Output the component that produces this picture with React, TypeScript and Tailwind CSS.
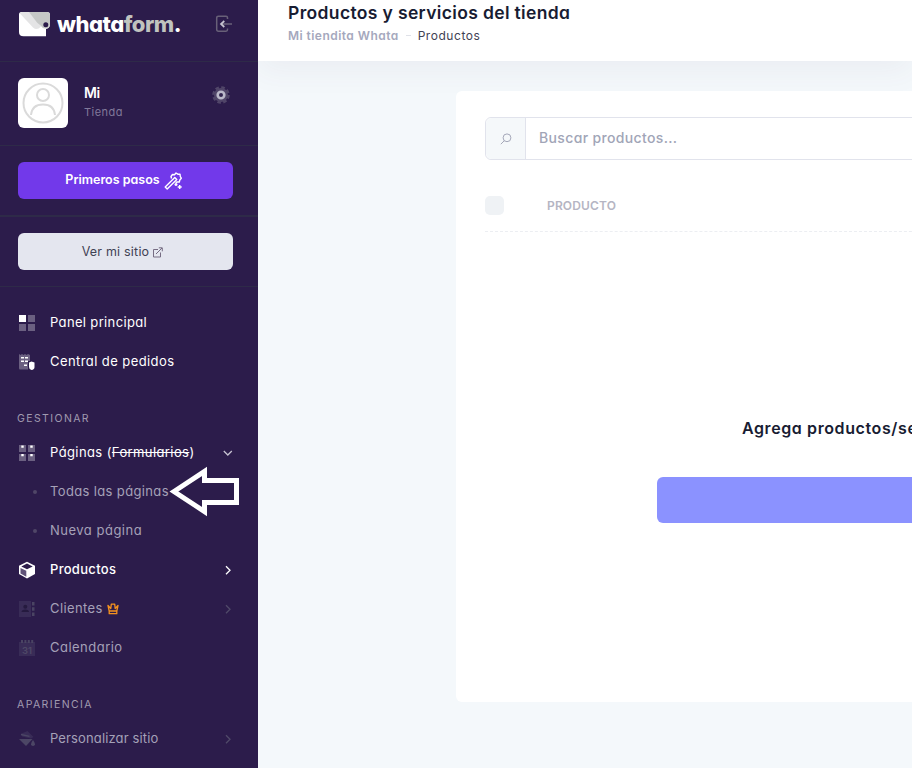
import type { ReactNode } from 'react';
import clsx from 'clsx';

const Logo = () => (
  <div className="flex items-center">
    <svg width="33" height="26" viewBox="0 0 33 26" className="shrink-0">
      <path d="M1 3.500Q1 1 3.500 1H29Q32 1 32 4V14Q31.500 17.500 28 18V25.300H5.500Q1 25.300 1 21Z" fill="#fff" />
      <path d="M1.500 2L4 1H14L23 15.500Q19 20 15 16.500Z" fill="#e4e4e5" />
      <path d="M11 1H29Q32 1 32 4V14Q31 18 27 17.500Q24 17 22.500 14.500L19 11.500Z" fill="#c5c7c6" />
      <circle cx="27.800" cy="13.800" r="2.500" fill="#2c1c4b" />
    </svg>
    <span className="ml-[6px] text-[22px] leading-[26px] font-extrabold tracking-[-0.500px] text-white">
      whata<span className="text-[#c0c3bf]">form</span>.
    </span>
  </div>
);

const CollapseIcon = () => (
  <svg width="18" height="18" viewBox="0 0 18 18" fill="none" strokeWidth="1.500">
    <path d="M12.500 4V2.800Q12.500 1.300 11 1.300H3.500Q1.700 1.300 1.700 3V14.500Q1.700 16.200 3.500 16.200H11Q12.500 16.200 12.500 14.500V13.500" stroke="#686078" />
    <path d="M7 9H17" stroke="#686078" />
    <path d="M9.300 6L6 9L9.300 12" stroke="#c6c3d0" strokeWidth="1.700" />
  </svg>
);

const GearIcon = () => (
  <svg width="18" height="18" viewBox="0 0 18 18">
    <circle cx="9" cy="9" r="7.600" fill="none" stroke="#514669" strokeWidth="2.400" strokeDasharray="3.600 2.370" />
    <circle cx="9" cy="9" r="7" fill="#514669" />
    <circle cx="9" cy="9" r="3.300" fill="#33264f" stroke="#bbb9c9" strokeWidth="2.600" />
  </svg>
);

const WandIcon = () => (
  <svg width="18" height="18" viewBox="0 0 18 18" fill="none" stroke="#fff" strokeWidth="1.400" strokeLinejoin="round">
    <path d="M1.200 15L10.800 5.400L12.800 7.400L3.200 17Z" />
    <path d="M7.500 6.500L7 4.500L8.500 2.500L10.500 2.700L12 1L13.800 2.200L16 2.200L16.300 4.500L17.300 6.200L15.800 8L15.300 10L13.200 10L11.500 10.500" />
    <path d="M12 11V14M10.500 12.500H13.500M15.700 13V17M13.700 15H17.700" strokeWidth="1.500" />
  </svg>
);

const ExternalIcon = () => (
  <svg width="10" height="11" viewBox="0 0 10 11" fill="none" stroke="#766d83" strokeWidth="1">
    <path d="M5 2.500H.5V10H7.500V5.500M3 7L9 1M5.800.8H9.300V4.300" />
  </svg>
);

const GridIcon = () => (
  <svg width="18" height="18" viewBox="0 0 18 18">
    <path d="M10 1H17V8H10ZM1 10H8V17H1ZM10 10H17V17H10Z" fill="#6b6081" />
    <path d="M1 1H8V8H1Z" fill="#fff" />
  </svg>
);

const OrdersIcon = () => (
  <svg width="18" height="18" viewBox="0 0 18 18">
    <path d="M1 1L2.500 2L4 1L5.500 2L7 1L8.500 2L10 1L12 2V8H10V16.500H2Q1 16.500 1 15Z" fill="#6b6081" />
    <path d="M3 4H6V5.500H3ZM7 4H10V5.500H7ZM3 7.500H6V9H3ZM7 7.500H10V9H7ZM6 11.500H9V13H6Z" fill="#fff" />
    <path d="M11 9.500L13.500 8.500L16.500 9.500V14Q16.500 16.500 13.500 17Q11 16.500 11 14Z" fill="#fff" />
  </svg>
);

const PagesIcon = () => (
  <svg width="18" height="18" viewBox="0 0 18 18">
    <path d="M1 1H8V8H1ZM10 1H17V8H10ZM1 10H8V17H1ZM10 10H17V17H10Z" fill="#6b6081" />
    <path d="M3.300 1.500H5.700V3.700H3.300ZM12.300 1.500H14.700V3.700H12.300ZM3.300 10H5.700V12.200H3.300ZM12.300 10H14.700V12.200H12.300Z" fill="#fff" />
  </svg>
);

const BoxIcon = () => (
  <svg width="18" height="18" viewBox="0 0 18 18">
    <path d="M9 .7L17 4.800V13L9 17.500L1 13V4.800Z" fill="#fff" />
    <path d="M9 2.500L14.700 5.400L9 8.300L3.300 5.400Z" fill="#2c1c4b" />
    <path d="M2.500 7L8.300 9.800V15.700L2.500 12.500Z" fill="#5f5278" />
  </svg>
);

const ContactsIcon = () => (
  <svg width="18" height="18" viewBox="0 0 18 18">
    <path d="M1 1H13V17H1Z" fill="#392c57" />
    <circle cx="7.300" cy="6.800" r="2" fill="#251a3f" />
    <path d="M3.500 12Q3.500 9.500 7.300 9.500Q11 9.500 11 12Z" fill="#251a3f" />
    <path d="M14 2H16.500V5.500H14ZM14 7.300H16.500V10.800H14ZM14 12.600H16.500V16H14Z" fill="#4a4463" />
  </svg>
);

const CalendarIcon = () => (
  <svg width="18" height="18" viewBox="0 0 18 18">
    <path d="M1 3H17V17H1Z" fill="#392c57" />
    <path d="M3 1H5V4H3ZM6.400 1H8.400V4H6.400ZM9.800 1H11.800V4H9.800ZM13.200 1H15.200V4H13.200Z" fill="#4a4463" />
    <text x="9" y="14.500" textAnchor="middle" fontSize="9.500" fontWeight="600" fill="#4f4967">31</text>
  </svg>
);

const BucketIcon = () => (
  <svg width="18" height="18" viewBox="0 0 18 18">
    <path d="M3.500 3.500L9.500 1L15.500 7L13 8.500L4 6.500Z" fill="#392c57" />
    <path d="M1 9H14.500L8 16Z" fill="#4c4665" />
    <path d="M3 4.500L11.500 6.300" stroke="#4c4665" strokeWidth="1.300" />
    <path d="M15 10Q17 12.500 17 14.300Q16.800 16 15 16Q13 16 13 14.300Q13 12.500 15 10Z" fill="#4c4665" />
  </svg>
);

const CrownIcon = () => (
  <svg width="12" height="12" viewBox="0 0 12 12" fill="none" stroke="#f6921e" strokeWidth="1.300" strokeLinejoin="round">
    <path d="M2.200 8L1 2.500L3.800 5.500L4.300 1.200H7.700L8.200 5.500L11 2.500L9.800 8ZM2.200 8V10.700H9.800V8" />
  </svg>
);

const Chevron = ({ color, down }: { color: string; down?: boolean }) => (
  <svg width="10" height="10" viewBox="0 0 10 10" fill="none" stroke={color} strokeWidth="1.300" className={clsx('ml-auto mr-px', down && 'rotate-90')}>
    <path d="M3 1.200L7 5.200L3 9.200" />
  </svg>
);

interface ItemProps {
  icon?: ReactNode;
  text: string;
  children: ReactNode;
  end?: ReactNode;
}

const MenuItem = ({ icon, text, children, end }: ItemProps) => (
  <li className="flex h-[39px] items-center pl-[18px] pr-[24px]">
    <span className="flex w-[32px] shrink-0 items-center">{icon ?? <i className="ml-[15px] size-1 rounded-full bg-[#504667]" />}</span>
    <span className={clsx('flex items-center whitespace-nowrap text-[13px]', text)}>{children}</span>
    {end}
  </li>
);

const Heading = ({ children }: { children: ReactNode }) => (
  <li className="h-[52px] pl-[17px] pt-[30px] text-[10.500px] leading-4 tracking-[1.400px] text-[#a09ab0]">{children}</li>
);

const Sidebar = () => (
  <aside className="relative z-10 h-full w-[258px] shrink-0 bg-[#2c1c4b]">
    <div className="flex h-[62px] items-start justify-between border-b border-[#2e2a48] pl-[18px] pr-[25px] pt-[11px]">
      <Logo />
      <span className="pt-[4px]"><CollapseIcon /></span>
    </div>

    <div className="flex h-[84px] items-start border-b border-[#2e2a48] pl-[18px] pt-4">
      <div className="size-[50px] rounded-md bg-white">
        <svg width="50" height="50" viewBox="0 0 50 50" fill="none" stroke="#dadada" strokeWidth="2">
          <circle cx="25" cy="25" r="19.500" />
          <circle cx="25" cy="17" r="6" />
          <path d="M13 37Q14 26.500 25 26.500Q36 26.500 37 37" />
        </svg>
      </div>
      <div className="ml-4 pt-[5px]">
        <div className="text-[14px] font-semibold leading-5 tracking-[-0.300px] text-white">Mi</div>
        <div className="text-[11px] leading-[18px] tracking-[0.450px] text-[#81799a]">Tienda</div>
      </div>
      <span className="ml-auto mr-[28px] pt-[8px]"><GearIcon /></span>
    </div>

    <div className="h-[71px] border-b-2 border-[#2e2a48] px-[18px] pt-4">
      <button className="flex h-[37px] w-[215px] items-center justify-center gap-[4px] rounded-md bg-[#7239ea] pr-1 text-[12.500px] font-semibold text-white">
        Primeros pasos <WandIcon />
      </button>
    </div>

    <div className="h-[70px] border-b border-[#2e2a48] px-[18px] pt-4">
      <button className="flex h-[37px] w-[215px] items-center justify-center gap-1 rounded-md bg-[#e4e6ef] pr-[6px] pt-px text-[12.500px] tracking-[0.200px] text-[#3f4254]">
        Ver mi sitio <ExternalIcon />
      </button>
    </div>

    <ul className="pt-4">
      <MenuItem icon={<GridIcon />} text="text-white tracking-[0.350px]">Panel principal</MenuItem>
      <MenuItem icon={<OrdersIcon />} text="text-white tracking-[0.420px]">Central de pedidos</MenuItem>
      <Heading>GESTIONAR</Heading>
      <MenuItem icon={<PagesIcon />} text="text-white tracking-[0.400px]" end={<Chevron color="#c5c0d0" down />}>
        Páginas (<s>Formularios</s>)
      </MenuItem>
      <MenuItem text="text-[#a5a1b8] tracking-[0.360px]">Todas las páginas</MenuItem>
      <MenuItem text="text-[#a5a1b8] tracking-[0.500px]">Nueva página</MenuItem>
      <MenuItem icon={<BoxIcon />} text="text-white font-medium tracking-[0.300px]" end={<Chevron color="#ffffff" />}>Productos</MenuItem>
      <MenuItem icon={<ContactsIcon />} text="gap-1 text-[#a5a1b8] tracking-[0.380px]" end={<Chevron color="#514a69" />}>
        Clientes <CrownIcon />
      </MenuItem>
      <MenuItem icon={<CalendarIcon />} text="text-[#a5a1b8] tracking-[0.480px]">Calendario</MenuItem>
      <Heading>APARIENCIA</Heading>
      <MenuItem icon={<BucketIcon />} text="text-[#a5a1b8] tracking-[0.130px]" end={<Chevron color="#514a69" />}>Personalizar sitio</MenuItem>
    </ul>

    {/* Pointer over the highlighted entry */}
    <svg className="absolute left-[168px] top-[464px]" width="74" height="54" viewBox="0 0 74 54" fill="#2c1c4b" stroke="#fff" strokeWidth="5">
      <path d="M6 27.500L36.500 7.500V16.500H68.500V38.500H36.500V47.500Z" />
    </svg>
  </aside>
);

const Content = () => (
  <div className="min-w-0 flex-1 bg-[#f4f8fb]">
    <header className="h-[61px] bg-white pl-[30px] pt-px shadow-[0_10px_30px_0_rgba(82,63,105,0.06)]">
      <h1 className="whitespace-nowrap text-[17.500px] font-semibold leading-6 tracking-[0.350px] text-[#181c32]">Productos y servicios del tienda</h1>
      <div className="flex items-center text-[12px] leading-[21px]">
        <span className="font-semibold tracking-[0.450px] text-[#a5a8bd]">Mi tiendita Whata</span>
        <i className="mx-[7px] h-px w-[5px] bg-[#dfe1e8]" />
        <span className="tracking-[0.550px] text-[#3f4254]">Productos</span>
      </div>
    </header>

    <main className="relative ml-[198px] mt-[30px] h-[611px] w-[800px] rounded-md bg-white pl-[29px] pt-[26px]">
      <div className="flex h-[43px] rounded-md border border-[#e1e3ec]">
        <span className="flex w-[40px] shrink-0 items-center justify-center rounded-l-md border-r border-[#e1e3ec] bg-[#f5f8fa]">
          <svg width="12" height="12" viewBox="0 0 12 12" fill="none" stroke="#a5a8b9">
            <circle cx="7" cy="4.800" r="3.900" />
            <path d="M4.300 7.700L.8 11.200" />
          </svg>
        </span>
        <span className="pl-[13px] text-[14px] font-medium leading-[40px] tracking-[0.350px] text-[#a1a5b7]">Buscar productos...</span>
      </div>
      <div className="mt-[26px] flex h-[46px] border-b border-dashed border-[#eceef2] pt-[10px]">
        <span className="size-[19px] rounded-[5px] bg-[#eff2f5]" />
        <span className="ml-[43px] text-[12px] font-semibold leading-[20px] tracking-[0.150px] text-[#b5b5c3]">PRODUCTO</span>
      </div>
      <p className="ml-[257px] mt-[184px] whitespace-nowrap text-[16px] font-semibold leading-6 tracking-[0.600px] text-[#181c32]">Agrega productos/se</p>
      <div className="ml-[172px] mt-[37px] h-[46px] w-[400px] rounded-md bg-[#8b92ff]" />
    </main>
  </div>
);

export default function App() {
  return (
    <div className="flex h-[768px] w-[912px] overflow-hidden font-['Inter','Open_Sans',sans-serif] [font-feature-settings:'cv11']">
      <Sidebar />
      <Content />
    </div>
  );
}
